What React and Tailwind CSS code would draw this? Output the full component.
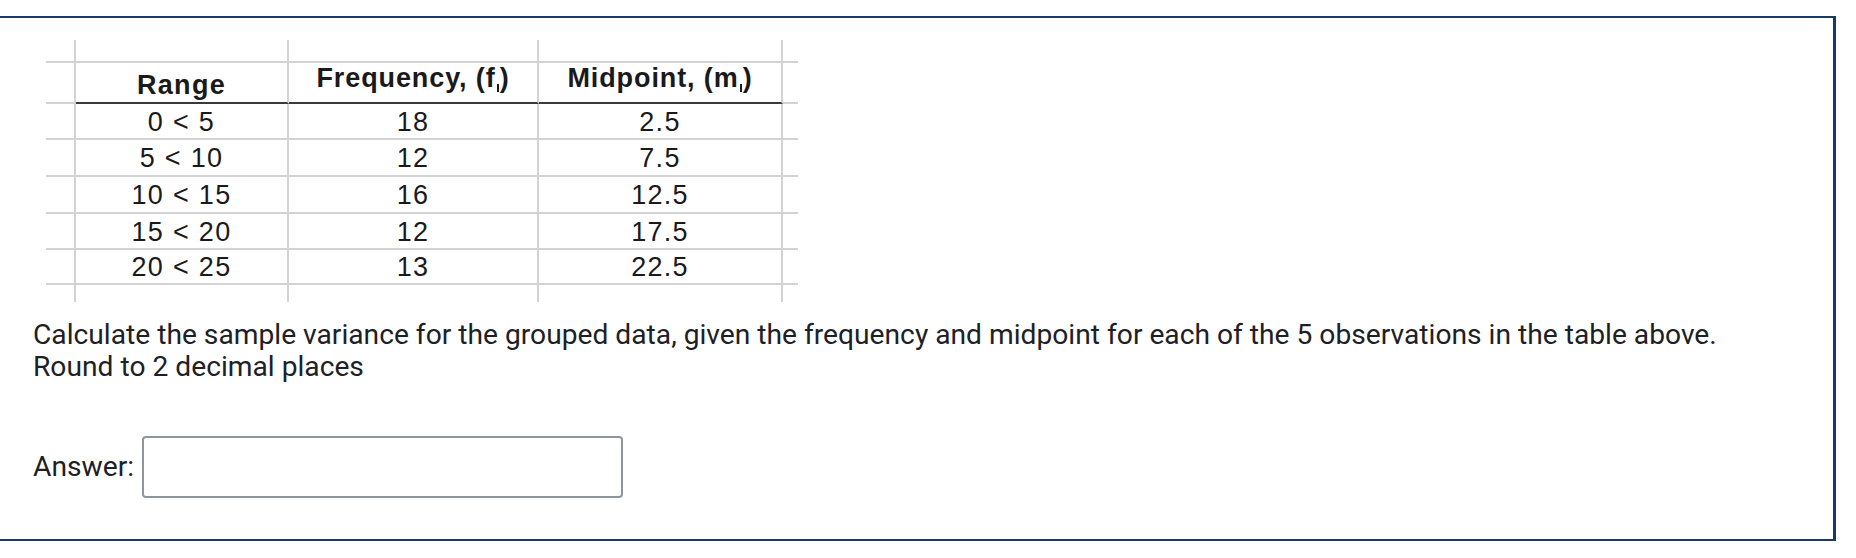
const rows = [
  ['0 < 5', '18', '2.5'],
  ['5 < 10', '12', '7.5'],
  ['10 < 15', '16', '12.5'],
  ['15 < 20', '12', '17.5'],
  ['20 < 25', '13', '22.5'],
];

// little clipped subscript left over from the spreadsheet picture
const Tick = () => <span className="inline-block w-[2px] h-[8px] bg-[#1a1a1a] align-[-7px] mx-[1px]" />;

const Cell = ({ col, last, dark, children, className = '' }) => {
  const right = col < 4 ? 'border-r-2 border-r-[#d3d3d3]' : '';
  const bottom = last ? '' : dark ? 'border-b-2 border-b-[#3a3a3a]' : 'border-b-2 border-b-[#d3d3d3]';
  return <div className={`flex justify-center ${right} ${bottom} ${className}`}>{children}</div>;
};

const SheetTable = () => {
  return (
    <div
      className="ml-[13px] grid grid-cols-[30px_213px_250px_244px_15px] grid-rows-[23px_41px_36px_37px_37px_36px_35px_17px] text-[27px] leading-none tracking-[1.3px] text-[#1a1a1a] w-max"
      style={{ fontFamily: '"Liberation Sans", Arial, sans-serif' }}
    >
      {/* empty top row */}
      {[0, 1, 2, 3, 4].map(c => (
        <Cell key={`t${c}`} col={c} />
      ))}

      {/* header */}
      <Cell col={0} />
      <Cell col={1} dark className="items-end pb-[3px] font-bold">
        Range
      </Cell>
      <Cell col={2} dark className="items-end pb-[10px] font-bold tracking-[0.9px]">
        Frequency, (f<Tick />)
      </Cell>
      <Cell col={3} dark className="items-end pb-[10px] font-bold tracking-[0.9px]">
        Midpoint, (m<Tick />)
      </Cell>
      <Cell col={4} />

      {rows.map((r, i) => (
        <div key={i} className="contents">
          <Cell col={0} />
          {r.map((v, j) => (
            <Cell key={j} col={j + 1} className="items-center pt-[2px]">
              {v}
            </Cell>
          ))}
          <Cell col={4} />
        </div>
      ))}

      {/* empty bottom row */}
      {[0, 1, 2, 3, 4].map(c => (
        <Cell key={`b${c}`} col={c} last />
      ))}
    </div>
  );
};

export default function App() {
  return (
    <div className="bg-white w-[1856px] h-[558px] overflow-hidden" style={{ fontFamily: 'Roboto, "Noto Sans", sans-serif' }}>
      <div className="mt-4 w-[1836px] border-t-2 border-r-[3px] border-b-2 border-[#183a68] pt-[22px] pl-[33px] pb-[41px]">
        <SheetTable />

        <p className="mt-[17px] text-[28.2px] leading-[32px] text-[#1d2125]">
          Calculate the sample variance for the grouped data, given the frequency and midpoint for each of the 5
          observations in the table above.
          <br />
          Round to 2 decimal places
        </p>

        <div className="mt-[53px] flex items-center gap-[8px] text-[28.2px] text-[#1d2125]">
          <label htmlFor="answer">Answer:</label>
          <input
            id="answer"
            type="text"
            className="w-[481px] h-[62px] border-2 border-[#8f959e] rounded-[4px] bg-white"
          />
        </div>
      </div>
    </div>
  );
}
